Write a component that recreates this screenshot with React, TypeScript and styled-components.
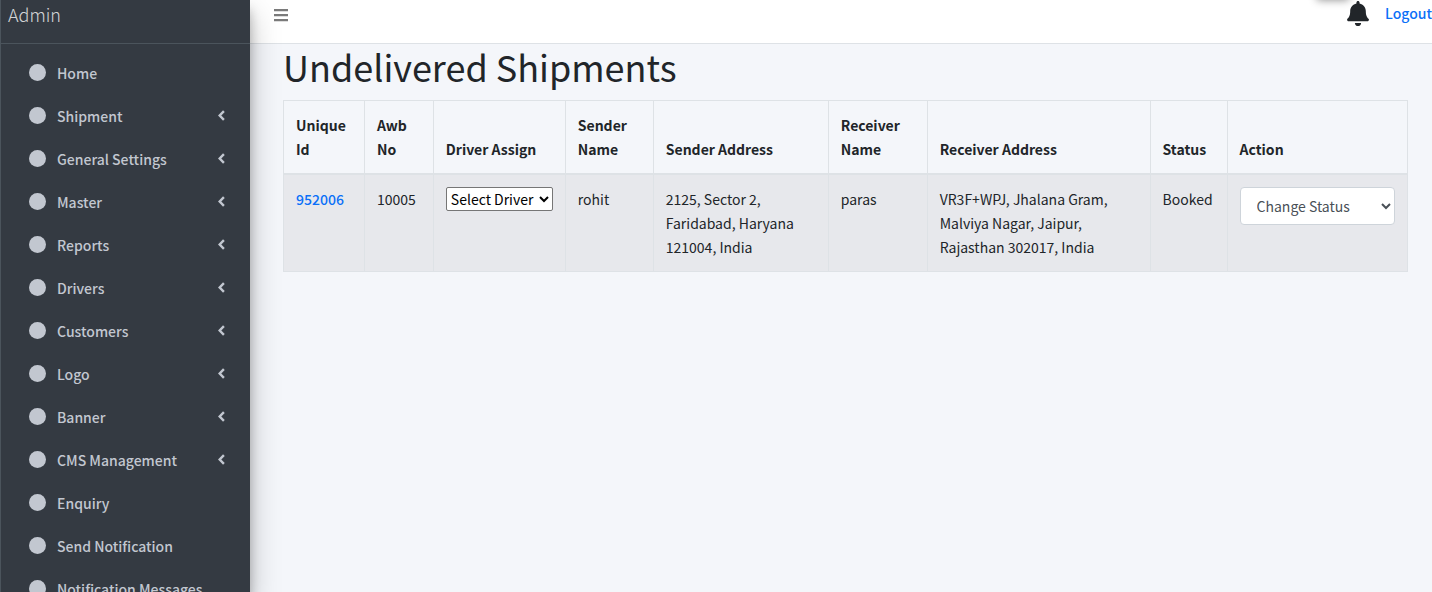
import React from "react";
import styled, { createGlobalStyle } from "styled-components";

const GlobalStyle = createGlobalStyle`
  *, *::before, *::after { box-sizing: border-box; }
  html, body { margin: 0; height: 100%; }
  body {
    background: #f4f6fa;
    color: #212529;
    font-family: "Source Sans Pro", "Noto Sans CJK SC", "Noto Sans", sans-serif;
    font-size: 14px;
    line-height: 24px;
    overflow: hidden;
  }
  a { color: #0b70f8; font-weight: 500; text-decoration: none; }
`;

const Shell = styled.div`
  display: flex;
  height: 100vh;
`;

const Sidebar = styled.aside`
  flex: 0 0 250px;
  z-index: 2;
  overflow: hidden;
  background: #343a42;
  border-left: 1px solid #4b545c;
  box-shadow: 0 14px 28px rgba(0, 0, 0, 0.25), 0 10px 10px rgba(0, 0, 0, 0.22);
`;

const Brand = styled.a`
  display: block;
  height: 44px;
  padding: 1px 7px 0;
  border-bottom: 1px solid #4b545c;
  color: rgba(255, 255, 255, 0.8);
  font-size: 18px;
  font-weight: 300;
  line-height: 27px;
`;

const NavList = styled.ul`
  display: grid;
  gap: 3px;
  margin: 0;
  padding: 9px 8px 0;
  list-style: none;
`;

const NavLink = styled.a`
  display: flex;
  align-items: center;
  height: 40px;
  padding: 0 17px 0 20px;
  color: #c2c7d0;
  font-weight: 500;
  white-space: nowrap;
`;

const Dot = styled.span`
  flex: none;
  width: 17px;
  height: 17px;
  margin: 0 11px 2px 0;
  border-radius: 50%;
  background: currentColor;
`;

const NavText = styled.span`
  flex: 1;
`;

const Chevron = styled.svg`
  width: 7px;
  height: 11px;
  margin-bottom: 2px;
  fill: none;
  stroke: currentColor;
  stroke-width: 2.4;
`;

const Page = styled.div`
  flex: 1;
  min-width: 0;
`;

const Topbar = styled.header`
  position: relative;
  display: flex;
  align-items: flex-start;
  justify-content: space-between;
  height: 44px;
  padding-left: 24px;
  background: #fff;
  border-bottom: 1px solid #dee2e6;
  overflow: hidden;
`;

const MenuButton = styled.button`
  display: flex;
  padding: 9px 0 0;
  border: 0;
  background: none;
  color: #7a7a7a;
`;

const Account = styled.div`
  display: flex;
  align-items: flex-start;
  gap: 16px;
  line-height: 26px;
`;

const BellButton = styled.button`
  display: flex;
  padding: 1px 0 0;
  border: 0;
  background: none;
  color: #212529;
`;

const PopoverEdge = styled.div`
  position: absolute;
  top: -18px;
  right: 84px;
  width: 30px;
  height: 17px;
  box-shadow: 0 0 9px 1px rgba(0, 0, 0, 0.45);
`;

const Content = styled.main`
  padding: 0 24px 0 33px;
`;

const Title = styled.h1`
  margin: 0 0 12px;
  font-size: 36px;
  font-weight: 400;
  line-height: 44px;
`;

const Table = styled.table`
  width: 100%;
  border-collapse: collapse;
  table-layout: fixed;
`;

const Col = styled.col<{ $share: number }>`
  width: ${(p) => p.$share}%;
`;

const HeadCell = styled.th`
  padding: 12px;
  border: 1px solid #dee2e6;
  border-bottom-width: 2px;
  text-align: left;
  vertical-align: bottom;
  font-weight: 700;
`;

const Cell = styled.td`
  padding: 12px;
  border: 1px solid #dee2e6;
  background: #e7e8ec;
  vertical-align: top;
`;

const DriverSelect = styled.select`
  display: block;
  width: 100%;
  height: 24px;
  padding: 0;
  border: 1px solid #767676;
  border-radius: 2px;
  background: #fff;
  color: #000;
  font: inherit;
`;

const StatusSelect = styled.select`
  display: block;
  width: 100%;
  height: 38px;
  padding: 6px 0 6px 12px;
  border: 1px solid #ced4da;
  border-radius: 4px;
  background: #fff;
  color: #495057;
  font: inherit;
`;

const nav: [string, boolean][] = [
  ["Home", false],
  ["Shipment", true],
  ["General Settings", true],
  ["Master", true],
  ["Reports", true],
  ["Drivers", true],
  ["Customers", true],
  ["Logo", true],
  ["Banner", true],
  ["CMS Management", true],
  ["Enquiry", false],
  ["Send Notification", false],
  ["Notification Messages", false],
];

const columns: [string, number][] = [
  ["Unique Id", 7.2],
  ["Awb No", 6.13],
  ["Driver Assign", 11.74],
  ["Sender Name", 7.83],
  ["Sender Address", 15.57],
  ["Receiver Name", 8.8],
  ["Receiver Address", 19.83],
  ["Status", 6.85],
  ["Action", 16.05],
];

export default function App() {
  return (
    <>
      <GlobalStyle />
      <Shell>
        <Sidebar>
          <Brand href="#">Admin</Brand>
          <nav>
            <NavList>
              {nav.map(([label, hasChildren]) => (
                <li key={label}>
                  <NavLink href="#">
                    <Dot />
                    <NavText>{label}</NavText>
                    {hasChildren && (
                      <Chevron viewBox="0 0 7 11" aria-hidden="true">
                        <path d="M5.9 1.2 1.7 5.5 5.9 9.8" />
                      </Chevron>
                    )}
                  </NavLink>
                </li>
              ))}
            </NavList>
          </nav>
        </Sidebar>
        <Page>
          <Topbar>
            <MenuButton aria-label="Toggle menu">
              <svg width="14" height="13" viewBox="0 0 14 13" fill="currentColor">
                <path d="M0 0h14v2.3H0zM0 5h14v2.3H0zM0 10h14v2.3H0z" />
              </svg>
            </MenuButton>
            <PopoverEdge />
            <Account>
              <BellButton aria-label="Notifications">
                <svg width="22" height="25" viewBox="0 0 448 512" fill="currentColor">
                  <path d="M224 512c35.32 0 63.97-28.65 63.97-64H160.03c0 35.35 28.65 64 63.97 64zm215.39-149.71c-19.32-20.76-55.47-51.99-55.47-154.29 0-77.7-54.48-139.9-127.94-155.16V32c0-17.67-14.32-32-31.98-32s-31.98 14.33-31.98 32v20.84C118.56 68.1 64.08 130.3 64.08 208c0 102.3-36.15 133.53-55.47 154.29-6 6.45-8.66 14.16-8.61 21.71.11 16.4 12.98 32 32.1 32h383.8c19.12 0 32-15.6 32.1-32 .05-7.55-2.61-15.27-8.61-21.71z" />
                </svg>
              </BellButton>
              <a href="#">Logout</a>
            </Account>
          </Topbar>
          <Content>
            <Title>Undelivered Shipments</Title>
            <Table>
              <colgroup>
                {columns.map(([name, share]) => (
                  <Col key={name} $share={share} />
                ))}
              </colgroup>
              <thead>
                <tr>
                  {columns.map(([name]) => (
                    <HeadCell key={name} scope="col">{name}</HeadCell>
                  ))}
                </tr>
              </thead>
              <tbody>
                <tr>
                  <Cell><a href="#">952006</a></Cell>
                  <Cell>10005</Cell>
                  <Cell>
                    <DriverSelect aria-label="Driver Assign">
                      <option>Select Driver</option>
                    </DriverSelect>
                  </Cell>
                  <Cell>rohit</Cell>
                  <Cell>2125, Sector 2, Faridabad, Haryana 121004, India</Cell>
                  <Cell>paras</Cell>
                  <Cell>VR3F+WPJ, Jhalana Gram, Malviya Nagar, Jaipur, Rajasthan 302017, India</Cell>
                  <Cell>Booked</Cell>
                  <Cell>
                    <StatusSelect aria-label="Action">
                      <option>Change Status</option>
                    </StatusSelect>
                  </Cell>
                </tr>
              </tbody>
            </Table>
          </Content>
        </Page>
      </Shell>
    </>
  );
}
